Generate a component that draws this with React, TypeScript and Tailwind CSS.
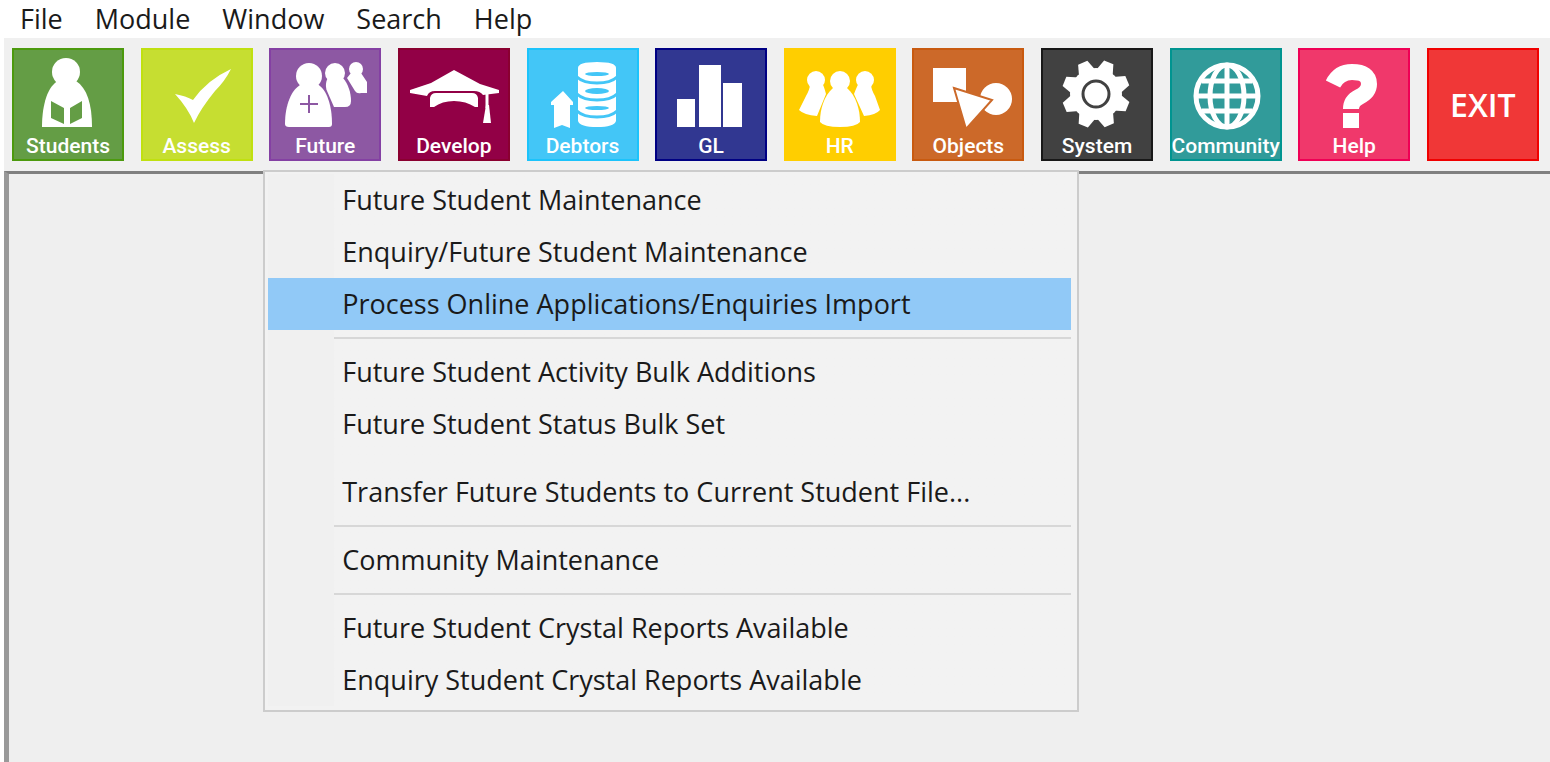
import React from "react";

const menuBar = ["File", "Module", "Window", "Search", "Help"];

const futureMenu = [
  ["Future Student Maintenance", "Enquiry/Future Student Maintenance", "Process Online Applications/Enquiries Import"],
  ["Future Student Activity Bulk Additions", "Future Student Status Bulk Set"],
  ["Transfer Future Students to Current Student File..."],
  ["Community Maintenance"],
  ["Future Student Crystal Reports Available", "Enquiry Student Crystal Reports Available"],
];

const selectedItem = "Process Online Applications/Enquiries Import";

function Icon({ children }: { children: React.ReactNode }) {
  return (
    <svg viewBox="0 0 112 84" className="w-28 h-[84px] shrink-0" fill="#fff" aria-hidden="true">
      {children}
    </svg>
  );
}

const studentsIcon = (
  <Icon>
    <circle cx="54" cy="24" r="14" />
    <path d="M46 33C36 38 30 56 30 79H80C80 56 75 40 64 33Z" />
    <path d="M39 53L52 60V76L39 70ZM58 60L70 53V70L58 76Z" fill="#649d45" />
  </Icon>
);

const assessIcon = (
  <Icon>
    <path d="M34 46Q45 48 52 52Q66 32 90 21Q84 33 74 43Q60 60 53 75Q47 60 34 46Z" />
  </Icon>
);

const futureIcon = (
  <Icon>
    <circle cx="40" cy="28" r="13" />
    <path d="M33 36C22 41 16 58 16 76Q16 79 20 79H60Q63 79 63 76C63 58 58 41 48 36Z" />
    <path d="M40 47V65M31 56H49" stroke="#8d58a3" strokeWidth="2" />
    <ellipse cx="66" cy="25" rx="10" ry="10" />
    <path d="M59 30C57 33 56 38 58 43L65 59H76Q82 59 82 53C82 44 79 36 74 30Z" />
    <ellipse cx="87" cy="21" rx="7" ry="7" />
    <path d="M82 25L78 30L86 43Q88 46 92 45H98V34L92 25Z" />
  </Icon>
);

const developIcon = (
  <Icon>
    <path d="M56 22L82 36L101 42V45L85 47Q82 43 76 43H37Q31 43 29 48L12 45V42L33 35Z" />
    <path d="M32 59V50Q33 45 38 45H74Q79 45 80 50V59H77Q68 53 56 53T36 59Z" />
    <path d="M89 45V60" stroke="#fff" strokeWidth="3" />
    <path d="M88 57H91L93 75H85Z" />
  </Icon>
);

const debtorsIcon = (
  <Icon>
    <path d="M36 43L46 54V57H43V80L35 77L27 80V57H24V54Z" />
    <path d="M51 20Q51 14 70 14T89 20V73Q87 79 70 79T51 73Z" />
    <g fill="#43c6f7">
      <ellipse cx="70" cy="26" rx="12" ry="2" />
      <ellipse cx="70" cy="43" rx="12" ry="3" />
      <ellipse cx="70" cy="60" rx="12" ry="2" />
    </g>
    <g fill="none" stroke="#43c6f7" strokeWidth="3">
      <path d="M50 29Q56 35 70 35T90 29M50 46Q56 52 70 52T90 46M50 63Q56 69 70 69T90 63" />
    </g>
  </Icon>
);

const glIcon = (
  <Icon>
    <path d="M22 51H40V79H22ZM44 17H66V79H44ZM68 35H87V79H68Z" />
  </Icon>
);

const hrIcon = (
  <Icon>
    <circle cx="32" cy="32" r="9" />
    <path d="M26 36Q26 41 22 48L15 62Q20 67 33 68L42 46Q40 38 38 35Z" />
    <circle cx="81" cy="32" r="9" />
    <path d="M87 36Q87 41 91 48L96 62Q92 67 80 68L70 46Q73 38 75 35Z" />
    <circle cx="56" cy="33" r="10" />
    <path d="M49 40H63C72 48 76 61 76 74Q72 79 56 79T36 74C36 61 40 48 49 40Z" />
  </Icon>
);

const objectsIcon = (
  <Icon>
    <path d="M21 20H54V54H21Z" />
    <circle cx="84" cy="51" r="16" />
    <path d="M42 40L80 52L54 81Z" stroke="#cc6929" strokeWidth="2" />
  </Icon>
);

const systemIcon = (
  <Icon>
    <circle cx="55" cy="46" r="26" />
    {[22, 67, 112, 157, 202, 247, 292, 337].map((angle) => (
      <path key={angle} d="M46 24L50 12H60L64 24Z" transform={`rotate(${angle} 55 46)`} />
    ))}
    <circle cx="55" cy="46" r="13" stroke="#414141" strokeWidth="3" />
  </Icon>
);

const communityIcon = (
  <Icon>
    <g fill="none" stroke="#fff" strokeWidth="5">
      <circle cx="57" cy="48" r="31" />
      <ellipse cx="57" cy="48" rx="17" ry="31" />
      <path d="M57 16V78M26 48H88M32 33H82M32 63H82" />
    </g>
  </Icon>
);

const helpIcon = (
  <Icon>
    <path d="M35 36Q41 24 54 24Q71 24 71 36Q71 44 61 49Q53 53 53 61" fill="none" stroke="#fff" strokeWidth="16" />
    <path d="M45 65H61V80H45Z" />
  </Icon>
);

const modules = [
  { name: "Students", icon: studentsIcon, color: "bg-[#649d45] outline-[#4c9a0e]" },
  { name: "Assess", icon: assessIcon, color: "bg-[#c6de31] outline-[#c0e010]" },
  { name: "Future", icon: futureIcon, color: "bg-[#8d58a3] outline-[#8440a3]" },
  { name: "Develop", icon: developIcon, color: "bg-[#920046] outline-[#8a0030]" },
  { name: "Debtors", icon: debtorsIcon, color: "bg-[#43c6f7] outline-[#1cc3fb]" },
  { name: "GL", icon: glIcon, color: "bg-[#313791] outline-[#000083]" },
  { name: "HR", icon: hrIcon, color: "bg-[#ffce00] outline-[#ffce00]" },
  { name: "Objects", icon: objectsIcon, color: "bg-[#cc6929] outline-[#c85a10]" },
  { name: "System", icon: systemIcon, color: "bg-[#414141] outline-[#181818]" },
  { name: "Community", icon: communityIcon, color: "bg-[#319b9a] outline-[#009490]" },
  { name: "Help", icon: helpIcon, color: "bg-[#f0386b] outline-[#ef0055]" },
  { name: "EXIT", icon: null, color: "bg-[#f03737] outline-[#f00000]" },
];

function FutureDropdown() {
  return (
    <div
      role="menu"
      className="absolute top-[122px] -left-1.5 z-10 w-[816px] border-2 border-[#cccccc] bg-[#f2f2f2] pt-0.5 pb-1 pl-[3px] pr-1.5"
    >
      {futureMenu.map((group, i) => (
        <div key={i} className="bg-linear-to-r from-[#f0f0f0] from-[66px] to-[#f2f2f2] to-[66px]">
          {i > 0 && (
            <div className="flex h-4 items-center pl-[66px]">
              {/* the Transfer item is only spaced, it has no rule above it */}
              <div className={i === 2 ? "h-0.5 w-full" : "h-0.5 w-full bg-[#d7d7d7]"} />
            </div>
          )}
          {group.map((item) => (
            <button
              key={item}
              role="menuitem"
              className={`block h-[52px] w-full pl-[74px] text-left text-[27px] leading-9 whitespace-nowrap text-[#1a1a1a] ${
                item === selectedItem ? "bg-[#91c9f7]" : ""
              }`}
            >
              {item}
            </button>
          ))}
        </div>
      ))}
    </div>
  );
}

export default function App() {
  return (
    <div className="flex min-h-screen flex-col bg-white pl-1 font-['Open_Sans','Noto_Sans',sans-serif]">
      {/* Menu bar */}
      <nav className="flex h-[38px] items-center gap-8 pl-4 text-[27px] leading-9 text-[#1a1a1a]">
        {menuBar.map((item) => (
          <button key={item}>{item}</button>
        ))}
      </nav>

      {/* Module toolbar */}
      <div className="flex justify-between bg-[#f0f0f0] pt-2.5 pr-[11px] pb-2.5 pl-2">
        {modules.map((m) => (
          <div key={m.name} className="relative">
            <button
              className={`flex h-[113px] w-28 flex-col items-center text-white outline-2 -outline-offset-2 ${m.color}`}
            >
              {m.icon}
              {m.icon ? (
                <span className="font-[Roboto,sans-serif] text-[21px] leading-7 font-medium">{m.name}</span>
              ) : (
                <span className="my-auto text-[32px] leading-9 font-semibold">{m.name}</span>
              )}
            </button>
            {m.name === "Future" && <FutureDropdown />}
          </div>
        ))}
      </div>

      {/* Workspace */}
      <main className="flex-1 border-t-3 border-l-5 border-t-[#808080] border-l-[#999999] bg-[#efefef]" />
    </div>
  );
}
